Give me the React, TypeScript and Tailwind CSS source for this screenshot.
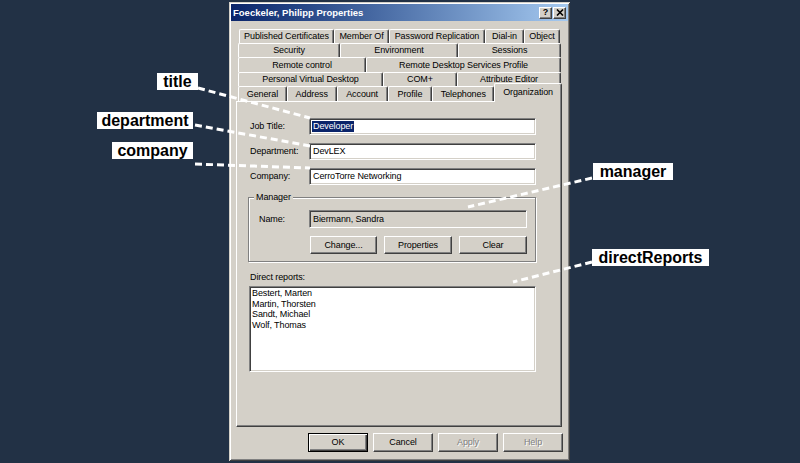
import React from "react";

type Tab = { label: string; w: string };
type Row = { h: string; pl: string; tabs: Tab[] };

// Multi-row tab strip of the classic AD user properties dialog (back row first)
const ROWS: Row[] = [
  {
    h: "h-[14px]",
    pl: "pl-[3px]",
    tabs: [
      { label: "Published Certificates", w: "w-[95px]" },
      { label: "Member Of", w: "w-[55px]" },
      { label: "Password Replication", w: "w-[96px]" },
      { label: "Dial-in", w: "w-[39px]" },
      { label: "Object", w: "w-[36px]" },
    ],
  },
  {
    h: "h-[14px]",
    pl: "pl-[2px]",
    tabs: [
      { label: "Security", w: "w-[102px]" },
      { label: "Environment", w: "w-[118px]" },
      { label: "Sessions", w: "w-[103px]" },
    ],
  },
  {
    h: "h-[15px]",
    pl: "pl-[2px]",
    tabs: [
      { label: "Remote control", w: "w-[128px]" },
      { label: "Remote Desktop Services Profile", w: "w-[195px]" },
    ],
  },
  {
    h: "h-[14px]",
    pl: "pl-[2px]",
    tabs: [
      { label: "Personal Virtual Desktop", w: "w-[145px]" },
      { label: "COM+", w: "w-[74px]" },
      { label: "Attribute Editor", w: "w-[104px]" },
    ],
  },
  {
    h: "h-[15px]",
    pl: "pl-[2px]",
    tabs: [
      { label: "General", w: "w-[49px]" },
      { label: "Address", w: "w-[50px]" },
      { label: "Account", w: "w-[51px]" },
      { label: "Profile", w: "w-[45px]" },
      { label: "Telephones", w: "w-[62px]" },
      { label: "Organization", w: "w-[68px]" },
    ],
  },
];

const SUNKEN =
  "border border-t-[#808080] border-l-[#808080] border-b-white border-r-white shadow-[inset_1px_1px_#404040,inset_-1px_-1px_#d4d0c8]";
const RAISED =
  "border border-t-white border-l-white border-b-[#404040] border-r-[#404040] shadow-[inset_-1px_-1px_#808080]";
const UI = "text-[9px] tracking-[-0.1px] leading-[11px]";

function TabButton({ tab, selected }: { tab: Tab; selected: boolean }) {
  if (selected) {
    return (
      <div
        className={`${tab.w} relative z-10 -mt-[3px] h-[19px] flex items-start justify-center pt-[3px] bg-[#d4d0c8] border-t border-l border-white border-r border-r-[#404040] shadow-[inset_-1px_0_#808080] rounded-t-[2px] ${UI}`}
      >
        {tab.label}
      </div>
    );
  }
  return (
    <div
      className={`${tab.w} h-full flex items-center justify-center bg-[#d4d0c8] border-t border-l border-white border-r border-r-[#404040] shadow-[inset_-1px_0_#808080] rounded-t-[2px] ${UI}`}
    >
      {tab.label}
    </div>
  );
}

function Field({ label, value, selected }: { label: string; value: string; selected?: boolean }) {
  return (
    <div className="flex items-center h-[17px]">
      <div className={`w-[59px] ${UI}`}>{label}</div>
      <div className={`w-[227px] h-[17px] bg-white flex items-center pl-[2px] ${SUNKEN} ${UI}`}>
        {selected ? (
          <span className="bg-[#0a246a] text-white px-[1px]">{value}</span>
        ) : (
          <span className="px-[1px]">{value}</span>
        )}
      </div>
    </div>
  );
}

function PushButton({
  label,
  w,
  h,
  isDefault,
  disabled,
}: {
  label: string;
  w: string;
  h: string;
  isDefault?: boolean;
  disabled?: boolean;
}) {
  const frame = isDefault
    ? "border border-black shadow-[inset_1px_1px_#fff,inset_-1px_-1px_#404040,inset_-2px_-2px_#808080]"
    : RAISED;
  const text = disabled ? "text-[#808080] [text-shadow:1px_1px_#fff]" : "text-black";
  return (
    <div className={`${w} ${h} bg-[#d4d0c8] flex items-center justify-center ${frame} ${UI} ${text}`}>
      {label}
    </div>
  );
}

function TitleBar() {
  return (
    <div className="h-[17px] flex items-center justify-between pl-[2px] pr-[2px] bg-gradient-to-r from-[#0a246a] to-[#a6caf0]">
      <span className="text-white font-bold text-[9.5px] leading-[12px]">Foeckeler, Philipp Properties</span>
      <div className="flex">
        <div className={`w-[13px] h-[12px] bg-[#d4d0c8] flex items-center justify-center ${RAISED}`}>
          <span className="font-bold text-[9px] leading-[9px]">?</span>
        </div>
        <div className={`w-[13px] h-[12px] ml-[1px] bg-[#d4d0c8] flex items-center justify-center ${RAISED}`}>
          <svg width="8" height="7" viewBox="0 0 8 7">
            <path d="M1 0.5 L7 6.5 M7 0.5 L1 6.5" stroke="#000" strokeWidth="1.6" />
          </svg>
        </div>
      </div>
    </div>
  );
}

function Dialog() {
  return (
    <div className="w-[341px] h-[459px] bg-[#d4d0c8] p-[2px] flex flex-col shadow-[inset_1px_1px_#d4d0c8,inset_-1px_-1px_#404040,inset_2px_2px_#fff,inset_-2px_-2px_#808080]">
      <TitleBar />

      <div className="ml-[5px] mt-[8px] w-[326px]">
        {ROWS.map((row, ri) => (
          <div key={ri} className={`flex ${row.h} ${row.pl}`}>
            {row.tabs.map((t) => (
              <TabButton key={t.label} tab={t} selected={t.label === "Organization"} />
            ))}
          </div>
        ))}

        <div className="w-[326px] h-[326px] pl-[13px] pt-[16px] border-t border-l border-white border-b border-r border-b-[#404040] border-r-[#404040] shadow-[inset_-1px_-1px_#808080] flex flex-col">
          <Field label="Job Title:" value="Developer" selected />
          <div className="mt-[8px]">
            <Field label="Department:" value="DevLEX" />
          </div>
          <div className="mt-[8px]">
            <Field label="Company:" value="CerroTorre Networking" />
          </div>

          <div className="relative -ml-[2px] mt-[12px] w-[288px] h-[65px] border border-[#808080] shadow-[1px_1px_#fff,inset_1px_1px_#fff] pl-[10px] pt-[12px]">
            <span className={`absolute -top-[6px] left-[5px] bg-[#d4d0c8] px-[2px] ${UI}`}>Manager</span>
            <div className="flex items-center h-[18px]">
              <div className={`w-[50px] ${UI}`}>Name:</div>
              <div className={`w-[218px] h-[18px] flex items-center pl-[3px] bg-[#d4d0c8] ${SUNKEN} ${UI}`}>
                Biermann, Sandra
              </div>
            </div>
            <div className="flex gap-[7px] mt-[8px] ml-[51px]">
              <PushButton label="Change..." w="w-[67px]" h="h-[18px]" />
              <PushButton label="Properties" w="w-[68px]" h="h-[18px]" />
              <PushButton label="Clear" w="w-[68px]" h="h-[18px]" />
            </div>
          </div>

          <div className={`mt-[10px] ${UI}`}>Direct reports:</div>
          <div className={`-ml-[1px] mt-[3px] w-[287px] h-[86px] bg-white pl-[2px] pt-[1px] ${SUNKEN}`}>
            {["Bestert, Marten", "Martin, Thorsten", "Sandt, Michael", "Wolf, Thomas"].map((n) => (
              <div key={n} className="text-[9px] tracking-[-0.1px] leading-[10.5px]">
                {n}
              </div>
            ))}
          </div>
        </div>
      </div>

      <div className="flex justify-end gap-[5px] mt-[6px] pr-[5px]">
        <PushButton label="OK" w="w-[60px]" h="h-[19px]" isDefault />
        <PushButton label="Cancel" w="w-[60px]" h="h-[19px]" />
        <PushButton label="Apply" w="w-[60px]" h="h-[19px]" disabled />
        <PushButton label="Help" w="w-[60px]" h="h-[19px]" disabled />
      </div>
    </div>
  );
}

// Attribute name labels pointing at the dialog fields
const CALLOUTS = [
  { text: "title", cls: "left-[157px] top-[73px] w-[41px]" },
  { text: "department", cls: "left-[97px] top-[112px] w-[96px]" },
  { text: "company", cls: "left-[112px] top-[142px] w-[81px]" },
  { text: "manager", cls: "left-[593px] top-[163px] w-[80px]" },
  { text: "directReports", cls: "left-[592px] top-[249px] w-[117px]" },
];

const LEADERS: [number, number, number, number][] = [
  [198, 88, 310, 118],
  [195, 125, 310, 146],
  [195, 164, 310, 168],
  [592, 178, 468, 207],
  [592, 262, 513, 282],
];

export default function App() {
  return (
    <div className="relative w-[800px] h-[463px] overflow-hidden bg-[#223145] pl-[229px] pt-[2px] font-['Liberation_Sans',Arial,sans-serif] text-black">
      <Dialog />

      {CALLOUTS.map((c) => (
        <div
          key={c.text}
          className={`absolute ${c.cls} h-[17px] bg-white flex items-center justify-center text-[16px] leading-[17px] font-bold text-black`}
        >
          {c.text}
        </div>
      ))}

      <svg className="absolute left-0 top-0 pointer-events-none" width="800" height="463">
        {LEADERS.map(([x1, y1, x2, y2], i) => (
          <line
            key={i}
            x1={x1}
            y1={y1}
            x2={x2}
            y2={y2}
            stroke="#fff"
            strokeWidth="3"
            strokeDasharray="7 4"
          />
        ))}
      </svg>
    </div>
  );
}
